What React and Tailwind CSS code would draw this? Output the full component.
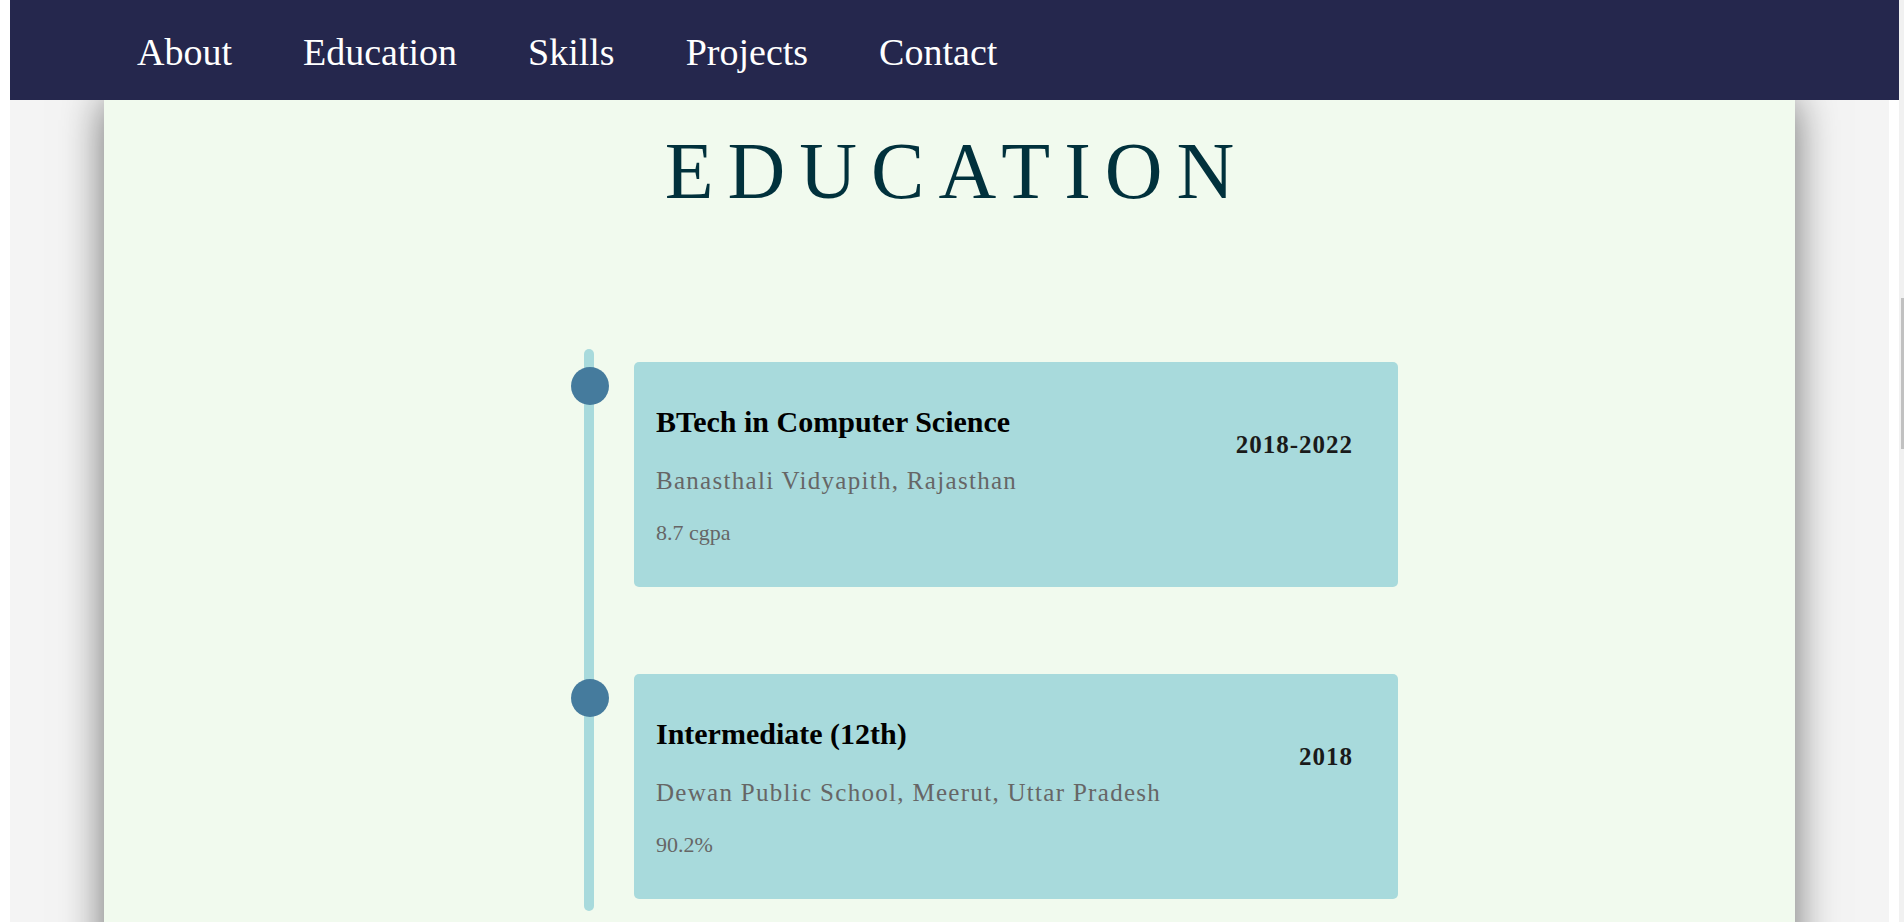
import React from "react";

const items = [
  {
    title: "BTech in Computer Science",
    place: "Banasthali Vidyapith, Rajasthan",
    grade: "8.7 cgpa",
    year: "2018-2022",
  },
  {
    title: "Intermediate (12th)",
    place: "Dewan Public School, Meerut, Uttar Pradesh",
    grade: "90.2%",
    year: "2018",
  },
];

function Card({ item }) {
  return (
    <div className="relative h-[225px] w-[764px] rounded-[5px] bg-[#a8dadc] pl-[22px] pr-[45px] flex justify-between">
      <div className="absolute left-[-63px] top-[5px] h-[38px] w-[38px] rounded-full bg-[#457b9d]" />
      <div className="flex flex-col">
        <h3 className="mt-[43px] text-[30px] leading-[34px] font-bold text-black">{item.title}</h3>
        <p className="mt-[27px] text-[25px] leading-[29px] tracking-[1.3px] text-[#666666]">{item.place}</p>
        <p className="mt-[25px] text-[22px] leading-[26px] text-[#666666]">{item.grade}</p>
      </div>
      <div className="mt-[68px] text-[25px] leading-[29px] font-bold tracking-[1px] text-[#1a1a1a]">{item.year}</div>
    </div>
  );
}

export default function App() {
  const links = ["About", "Education", "Skills", "Projects", "Contact"];
  return (
    <div className="h-screen w-full overflow-hidden bg-white flex font-['Liberation_Serif',serif]">
      <div className="w-[10px] shrink-0 bg-white" />
      <div className="flex-1 flex flex-col min-w-0">
        <nav className="relative z-10 h-[100px] shrink-0 bg-[#25274d] flex items-start pl-[127px] pt-[30px] gap-[71px]">
          {links.map((l) => (
            <a key={l} className="text-[38px] leading-[44px] text-white">{l}</a>
          ))}
        </nav>
        <div className="flex-1 flex min-h-0">
          <div className="flex-1 bg-[#f4f4f4]">
            <div className="mx-auto w-[90%] h-[1200px] bg-[#f1faee] shadow-[0_0_40px_rgba(0,0,0,0.55)] flex flex-col">
              <h1 className="mt-[31px] text-center text-[80px] leading-[80px] tracking-[14px] pl-[14px] text-[#01313c]">EDUCATION</h1>
              <div className="mt-[138px] ml-[480px] flex">
                <div className="w-[10px] rounded-full bg-[#a8dadc]" />
                <div className="ml-[40px] pt-[13px] pb-[12px] flex flex-col gap-[87px]">
                  {items.map((it) => (
                    <Card key={it.title} item={it} />
                  ))}
                </div>
              </div>
            </div>
          </div>
          <div className="w-[10px] shrink-0 bg-white" />
        </div>
      </div>
      <div className="w-[5px] shrink-0 bg-[#f1f1f1] flex pl-[2px]">
        <div className="mt-[298px] h-[151px] w-[3px] bg-[#c1c1c1]" />
      </div>
    </div>
  );
}
